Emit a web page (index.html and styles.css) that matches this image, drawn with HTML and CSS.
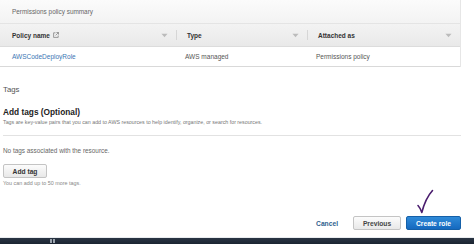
FILE: index.html
```html
<!DOCTYPE html>
<html lang="en">
<head>
    <meta charset="UTF-8">
    <meta name="viewport" content="width=device-width, initial-scale=1.0">
    <title>Create role - Review</title>
    <link rel="stylesheet" href="styles.css">
</head>
<body>
    <div class="page">
        <!-- Policy summary panel -->
        <div class="summary">
            <div class="summary-head">Permissions policy summary</div>
            <div class="grid grid-head">
                <div class="cell first">
                    <span>Policy name</span>
                    <svg class="ext" width="6" height="6" viewBox="0 0 6 6"><path d="M2.5 0.8H0.6V5.4H5.2V3.5" fill="none" stroke="#777" stroke-width="0.7"/><path d="M3.4 0.5H5.5V2.6M5.4 0.6L2.6 3.4" fill="none" stroke="#777" stroke-width="0.7"/></svg>
                    <svg class="filter" width="7" height="5" viewBox="0 0 7 5"><path d="M0.5 0.8H6.5L3.5 4.2Z" fill="#bbb"/></svg>
                </div>
                <div class="cell">
                    <span>Type</span>
                    <svg class="filter" width="7" height="5" viewBox="0 0 7 5"><path d="M0.5 0.8H6.5L3.5 4.2Z" fill="#bbb"/></svg>
                </div>
                <div class="cell">
                    <span>Attached as</span>
                    <svg class="filter" width="7" height="5" viewBox="0 0 7 5"><path d="M0.5 0.8H6.5L3.5 4.2Z" fill="#bbb"/></svg>
                </div>
            </div>
            <div class="grid grid-row">
                <div class="cell first"><a href="#" class="link">AWSCodeDeployRole</a></div>
                <div class="cell">AWS managed</div>
                <div class="cell">Permissions policy</div>
            </div>
        </div>

        <!-- Tags section -->
        <div class="tags-title">Tags</div>
        <h3 class="section-title">Add tags (Optional)</h3>
        <p class="section-desc">Tags are key-value pairs that you can add to AWS resources to help identify, organize, or search for resources.</p>
        <div class="divider"></div>
        <p class="empty">No tags associated with the resource.</p>
        <button class="btn add-tag">Add tag</button>
        <p class="hint">You can add up to 50 more tags.</p>

        <!-- Footer actions -->
        <div class="actions">
            <a href="#" class="cancel">Cancel</a>
            <button class="btn previous">Previous</button>
            <button class="btn primary">Create role</button>
            <svg class="check" width="20" height="26" viewBox="0 0 20 26"><path d="M2 16.5C3.5 18 4.5 20 5.8 23.5C8 15 11.5 7 16.5 1.5" fill="none" stroke="#4a1d6e" stroke-width="1.6" stroke-linecap="round" stroke-linejoin="round"/></svg>
        </div>
    </div>

    <div class="taskbar">
        <span class="tb-icon"></span>
    </div>
</body>
</html>
```

FILE: styles.css
```css
body {
    margin: 0;
    font-family: "Liberation Sans", Arial, sans-serif;
    background-color: #fff;
    color: #555;
    height: 244px;
    overflow: hidden;
    display: flex;
    flex-direction: column;
}
.page {
    flex: 1;
    width: 461px;
}
.summary {
    border-right: 1px solid #e6e6e6;
}
.summary-head {
    height: 24px;
    line-height: 23px;
    padding-left: 12px;
    font-size: 6.4px;
    color: #666;
    background: linear-gradient(#fbfbfb, #f3f3f3);
    border-bottom: 1px solid #e4e4e4;
    box-sizing: border-box;
}
.grid {
    display: grid;
    grid-template-columns: 176px 131px 1fr;
}
.grid-head {
    height: 23px;
    background: linear-gradient(#f3f3f3, #e9e9e9);
    border-bottom: 1px solid #dcdcdc;
    box-sizing: border-box;
    font-size: 6.5px;
    font-weight: bold;
    color: #333;
}
.grid-head .cell {
    display: flex;
    align-items: center;
    gap: 3px;
    padding: 0 8px 0 10px;
    border-left: 1px solid #d6d6d6;
    margin: 6px 0;
}
.grid-head .cell.first {
    border-left: none;
    padding-left: 12px;
}
.filter {
    margin-left: auto;
}
.grid-row {
    height: 20px;
    border-bottom: 1px solid #d9d9d9;
    box-sizing: border-box;
    font-size: 6.5px;
    color: #555;
}
.grid-row .cell {
    display: flex;
    align-items: center;
    padding-left: 9px;
}
.grid-row .cell.first {
    padding-left: 12px;
}
.link {
    color: #3b76b4;
    text-decoration: none;
}
.tags-title {
    margin-top: 16px;
    padding-left: 3px;
    line-height: 14px;
    font-size: 7.8px;
    color: #555;
}
.section-title {
    margin: 9px 0 0;
    padding-left: 3px;
    line-height: 13px;
    font-size: 8.3px;
    font-weight: bold;
    color: #222;
}
.section-desc {
    margin: 0;
    padding-left: 3px;
    line-height: 7px;
    font-size: 5.3px;
    color: #777;
}
.divider {
    margin: 9px 0 0 3px;
    border-top: 1px solid #e2e2e2;
}
.empty {
    margin: 8px 0 0;
    padding-left: 3px;
    line-height: 13px;
    font-size: 6.4px;
    color: #666;
}
.btn {
    font-family: inherit;
    font-weight: bold;
    font-size: 6.7px;
    height: 14px;
    padding: 0;
    white-space: nowrap;
    border-radius: 2px;
    border: 1px solid #c4c4c4;
    background: linear-gradient(#fcfcfc, #e8e8e8);
    color: #444;
    cursor: pointer;
}
.add-tag {
    display: block;
    margin: 7px 0 0 3px;
    width: 44px;
    color: #333;
}
.hint {
    margin: 0;
    padding-left: 3px;
    line-height: 10px;
    font-size: 5.4px;
    color: #888;
}
.actions {
    position: relative;
    margin-top: 28px;
    display: flex;
    justify-content: flex-end;
    align-items: center;
    gap: 5px;
}
.cancel {
    font-size: 6.7px;
    font-weight: bold;
    color: #2f5f8e;
    text-decoration: none;
    margin-right: 10px;
}
.previous {
    width: 48px;
}
.primary {
    width: 55px;
    color: #fff;
    border-color: #1560a8;
    background: linear-gradient(#2f8ad8, #1569bf);
}
.check {
    position: absolute;
    right: 25px;
    bottom: 15px;
}
.taskbar {
    height: 6px;
    background: linear-gradient(#2a3544, #1b2431);
    border-top: 1px solid #e9ecef;
    position: relative;
}
.tb-icon {
    position: absolute;
    left: 50px;
    top: 1px;
    width: 5px;
    height: 4px;
    background: repeating-linear-gradient(90deg, #9aa3ad 0 2px, transparent 2px 3px);
}
```
